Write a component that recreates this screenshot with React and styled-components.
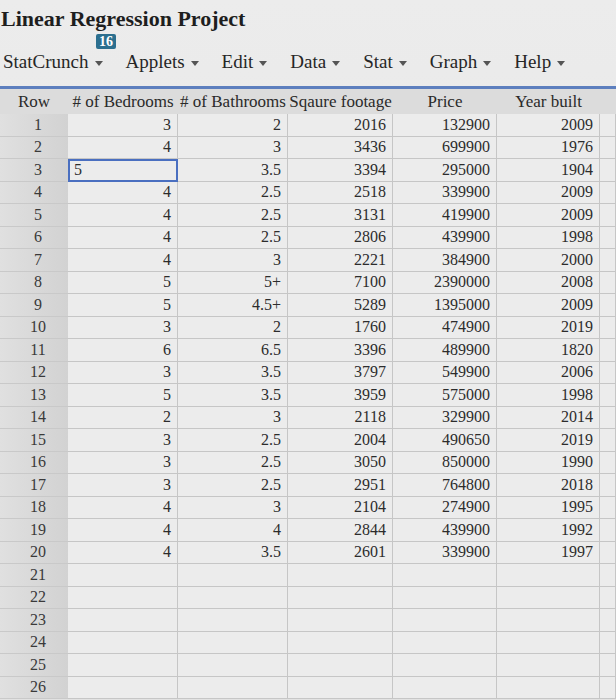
import React from 'react';
import styled, { createGlobalStyle } from 'styled-components';

const GlobalStyle = createGlobalStyle`
  html, body {
    margin: 0;
    padding: 0;
    background: #e4e4e4;
  }
  body {
    font-family: "Liberation Serif", "Times New Roman", serif;
    color: #2a2a2a;
  }
`;

const Page = styled.div`
  width: 616px;
  height: 700px;
  overflow: hidden;
  background: linear-gradient(180deg, #ececec 0%, #e2e2e2 100%);
`;

const Title = styled.h1`
  margin: 0;
  padding: 7px 0 0 1px;
  font-size: 22px;
  font-weight: bold;
  color: #1e1e1e;
  line-height: 24px;
  height: 32px;
  box-sizing: border-box;
`;

const MenuBar = styled.nav`
  display: flex;
  align-items: flex-end;
  height: 57px;
  padding: 0 0 13px 3px;
  box-sizing: border-box;
  gap: 23px;
  border-bottom: 3px solid #5d7fbe;
`;

const MenuItem = styled.div`
  position: relative;
  font-size: 19px;
  line-height: 22px;
  color: #262626;
  display: flex;
  align-items: center;
  gap: 6px;
  white-space: nowrap;
  &::after {
    content: '';
    border-left: 4px solid transparent;
    border-right: 4px solid transparent;
    border-top: 5px solid #555;
    margin-top: 2px;
  }
`;

const Badge = styled.span`
  position: absolute;
  left: 93px;
  top: -17px;
  background: #2c6f8f;
  color: #fff;
  font-weight: bold;
  font-size: 14px;
  line-height: 15px;
  padding: 0 3px;
  border-radius: 2px;
`;

const Grid = styled.div`
  display: grid;
  grid-template-columns: 68px 110px 110px 105px 104px 103px 16px;
`;

const HeadCell = styled.div`
  height: 25px;
  display: flex;
  align-items: center;
  justify-content: center;
  font-size: 17px;
  color: #2a2a2a;
  white-space: nowrap;
  overflow: hidden;
  background: #dcdcdc;
`;

const RowNum = styled.div`
  height: 22.5px;
  display: flex;
  align-items: center;
  justify-content: center;
  padding-left: 8px;
  font-size: 16px;
  color: #3a3a3a;
  background: linear-gradient(90deg, #e0e0e0 0%, #d2d2d2 100%);
  border-bottom: 1px solid #c9c9c9;
  box-sizing: border-box;
`;

const Cell = styled.div`
  height: 22.5px;
  box-sizing: border-box;
  display: flex;
  align-items: center;
  justify-content: ${(p) => (p.editing ? 'flex-start' : 'flex-end')};
  padding: ${(p) => (p.editing ? '0 6px' : '0 6px 0 0')};
  font-size: 16px;
  color: #2c2c2c;
  background: #ececec;
  border-right: 1px solid #c6c6c6;
  border-bottom: 1px solid #c6c6c6;
  outline: ${(p) => (p.editing ? '2px solid #4a6fc0' : 'none')};
  outline-offset: -2px;
`;

const columns = ['# of Bedrooms', '# of Bathrooms', 'Sqaure footage', 'Price', 'Year built'];

const data = [
  ['3', '2', '2016', '132900', '2009'],
  ['4', '3', '3436', '699900', '1976'],
  ['5', '3.5', '3394', '295000', '1904'],
  ['4', '2.5', '2518', '339900', '2009'],
  ['4', '2.5', '3131', '419900', '2009'],
  ['4', '2.5', '2806', '439900', '1998'],
  ['4', '3', '2221', '384900', '2000'],
  ['5', '5+', '7100', '2390000', '2008'],
  ['5', '4.5+', '5289', '1395000', '2009'],
  ['3', '2', '1760', '474900', '2019'],
  ['6', '6.5', '3396', '489900', '1820'],
  ['3', '3.5', '3797', '549900', '2006'],
  ['5', '3.5', '3959', '575000', '1998'],
  ['2', '3', '2118', '329900', '2014'],
  ['3', '2.5', '2004', '490650', '2019'],
  ['3', '2.5', '3050', '850000', '1990'],
  ['3', '2.5', '2951', '764800', '2018'],
  ['4', '3', '2104', '274900', '1995'],
  ['4', '4', '2844', '439900', '1992'],
  ['4', '3.5', '2601', '339900', '1997'],
];

const TOTAL_ROWS = 26;

export default function App() {
  const rows = [];
  for (let i = 0; i < TOTAL_ROWS; i++) {
    const values = data[i] || ['', '', '', '', ''];
    rows.push(
      <React.Fragment key={i}>
        <RowNum>{i + 1}</RowNum>
        {values.map((v, j) => (
          <Cell key={j} editing={i === 2 && j === 0}>
            {v}
          </Cell>
        ))}
        <Cell />
      </React.Fragment>
    );
  }

  return (
    <Page>
      <GlobalStyle />
      <Title>Linear Regression Project</Title>
      <MenuBar>
        <MenuItem>
          StatCrunch
          <Badge>16</Badge>
        </MenuItem>
        <MenuItem>Applets</MenuItem>
        <MenuItem>Edit</MenuItem>
        <MenuItem>Data</MenuItem>
        <MenuItem>Stat</MenuItem>
        <MenuItem>Graph</MenuItem>
        <MenuItem>Help</MenuItem>
      </MenuBar>
      <Grid>
        <HeadCell>Row</HeadCell>
        {columns.map((c) => (
          <HeadCell key={c}>{c}</HeadCell>
        ))}
        <HeadCell />
        {rows}
      </Grid>
    </Page>
  );
}
